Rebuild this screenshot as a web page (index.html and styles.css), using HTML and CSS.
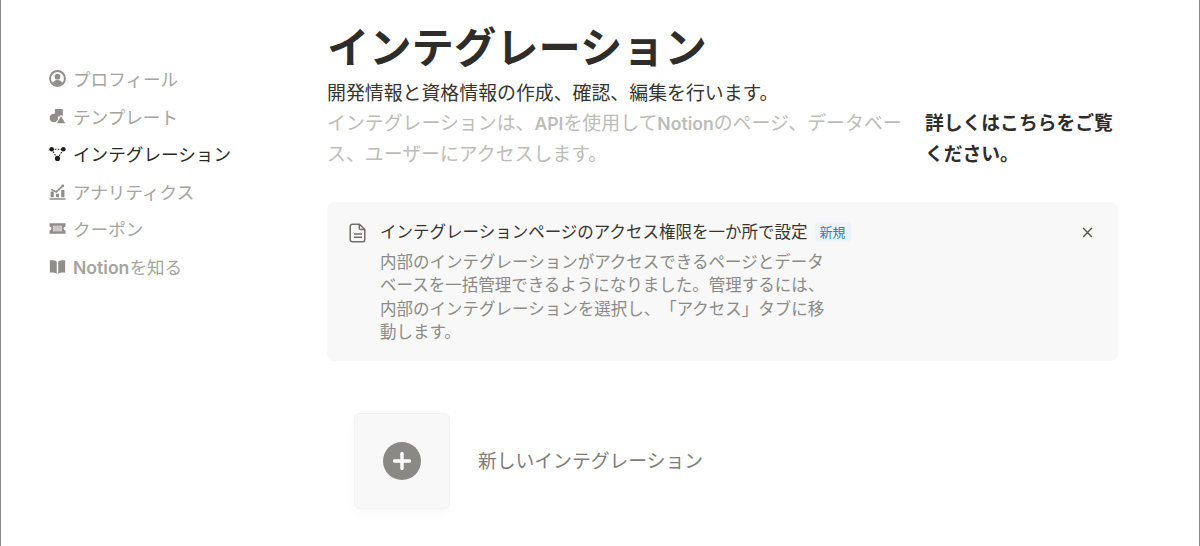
FILE: index.html
```html
<!DOCTYPE html>
<html lang="ja">
<head>
    <meta charset="UTF-8">
    <meta name="viewport" content="width=device-width, initial-scale=1.0">
    <title>インテグレーション</title>
    <link rel="stylesheet" href="styles.css">
</head>
<body>
    <div class="page">
        <nav class="side-nav">
            <a class="nav-item">
                <svg class="nav-icon" viewBox="0 0 16 16"><circle cx="8" cy="8" r="7" fill="none" stroke="currentColor" stroke-width="1.800"/><circle cx="8" cy="6.300" r="2.700" fill="currentColor"/><path d="M3.400 12.300c.8-2 2.500-2.900 4.600-2.900s3.800.9 4.600 2.900c-1.100 1.200-2.800 1.900-4.600 1.900s-3.500-.7-4.600-1.900z" fill="currentColor"/></svg>
                <span>プロフィール</span>
            </a>
            <a class="nav-item">
                <svg class="nav-icon" viewBox="0 0 16 16"><rect x="5.500" y="1" width="7.500" height="7" rx="1" fill="currentColor"/><circle cx="4.600" cy="9.400" r="4" fill="currentColor"/><path d="M11.300 6.800l4.700 8H6.600z" fill="currentColor" stroke="#fff" stroke-width=".9"/></svg>
                <span>テンプレート</span>
            </a>
            <a class="nav-item active">
                <svg class="nav-icon" viewBox="0 0 16 16"><path d="M2.500 4h11L8 13z" fill="none" stroke="currentColor" stroke-width="1" stroke-dasharray="1.600 1.200"/><circle cx="2.500" cy="4" r="2.200" fill="currentColor"/><circle cx="13.500" cy="4" r="2.200" fill="currentColor"/><circle cx="8" cy="12.600" r="2.400" fill="currentColor"/></svg>
                <span>インテグレーション</span>
            </a>
            <a class="nav-item">
                <svg class="nav-icon" viewBox="0 0 16 16"><path d="M.5 14.300h15v1.400H.5zM1.500 8h3v5.500h-3zM6.500 10h3v3.500h-3zM11.500 6.500h3v7h-3z" fill="currentColor"/><path d="M2 6l4.800 2.400 6-5.400" fill="none" stroke="currentColor" stroke-width="1.500"/><circle cx="13" cy="2.800" r="1.300" fill="currentColor"/></svg>
                <span>アナリティクス</span>
            </a>
            <a class="nav-item">
                <svg class="nav-icon" viewBox="0 0 16 16"><rect x="4" y="5.500" width="8" height="5" fill="#c9c8c6"/><path fill-rule="evenodd" d="M.5 3h15v3.200a1.800 1.800 0 0 0 0 3.600V13H.5V9.800a1.800 1.800 0 0 0 0-3.600zM3.800 5.300v5.400h8.400V5.300z" fill="currentColor"/></svg>
                <span>クーポン</span>
            </a>
            <a class="nav-item">
                <svg class="nav-icon" viewBox="0 0 16 16"><path d="M.8 2.300c2.500-.3 5 0 6.500 1.200V15c-1.500-1.100-4-1.500-6.500-1.200zM15.200 2.300c-2.500-.3-5 0-6.500 1.200V15c1.500-1.100 4-1.500 6.500-1.200z" fill="currentColor"/></svg>
                <span><b class="latin">Notion</b>を知る</span>
            </a>
        </nav>

        <main class="content">
            <h1 class="title">インテグレーション</h1>
            <p class="subtitle">開発情報と資格情報の作成、確認、編集を行います。</p>
            <div class="intro">
                <p class="intro-text">インテグレーションは、<b class="latin">API</b>を使用して<b class="latin">Notion</b>のページ、データベース、ユーザーにアクセスします。</p>
                <a class="intro-link">詳しくはこちらをご覧ください。</a>
            </div>

            <section class="callout">
                <svg class="callout-icon" viewBox="0 0 18 20"><path d="M3.500 1.200h7l5.300 5.300v10a2.300 2.300 0 0 1-2.300 2.300h-10a2.300 2.300 0 0 1-2.300-2.300V3.500a2.300 2.300 0 0 1 2.300-2.300z" fill="none" stroke="currentColor" stroke-width="1.500"/><path d="M10.300 1.500v3.700a1.300 1.300 0 0 0 1.300 1.300h3.900M5 11h8M5 14.300h8" fill="none" stroke="currentColor" stroke-width="1.500"/></svg>
                <div class="callout-body">
                    <div class="callout-head">
                        <span>インテグレーションページのアクセス権限を一か所で設定</span>
                        <span class="new-tag">新規</span>
                    </div>
                    <p class="callout-text">内部のインテグレーションがアクセスできるページとデータベースを一括管理できるようになりました。管理するには、内部のインテグレーションを選択し、「アクセス」タブに移動します。</p>
                </div>
                <svg class="close-icon" viewBox="0 0 12 12"><path d="M1.200 1.200l9.600 9.600M10.800 1.200l-9.600 9.600" fill="none" stroke="currentColor" stroke-width="1.500"/></svg>
            </section>

            <div class="new-row">
                <div class="new-tile">
                    <svg class="plus-icon" viewBox="0 0 38 38"><circle cx="19" cy="19" r="19" fill="currentColor"/><path d="M19 11.500v15M11.500 19h15" fill="none" stroke="#fff" stroke-width="3.400" stroke-linecap="round"/></svg>
                </div>
                <span class="new-label">新しいインテグレーション</span>
            </div>
        </main>
    </div>
</body>
</html>
```

FILE: styles.css
```css
* {
    margin: 0;
    padding: 0;
    box-sizing: border-box;
}

body {
    font-family: 'Inter', 'Noto Sans CJK JP', sans-serif;
    text-spacing-trim: space-all;
    background: white;
    color: #37352f;
    width: 1200px;
    height: 546px;
    overflow: hidden;
}

.page {
    width: 1200px;
    height: 546px;
    border-left: 1px solid #8a8a8a;
    border-right: 1px solid #8a8a8a;
    display: flex;
    overflow: hidden;
}

.side-nav {
    width: 326px;
    padding: 60px 0 0 48px;
    display: flex;
    flex-direction: column;
}

.nav-item {
    height: 37.5px;
    display: flex;
    align-items: center;
    gap: 7px;
    font-size: 17.6px;
    color: #a5a4a1;
}

.nav-item.active {
    color: #2a2926;
}

.nav-icon {
    width: 17px;
    height: 17px;
    flex-shrink: 0;
    color: #8f8e8b;
}

.nav-item.active .nav-icon {
    color: #1f1e1c;
}

.latin {
    font-weight: 600;
}

.content {
    width: 791px;
    padding-top: 19px;
}

.title {
    font-size: 42.3px;
    font-weight: 700;
    line-height: 58px;
    color: #2f2d29;
}

.subtitle {
    font-size: 18.9px;
    line-height: 28px;
    margin-top: 3px;
    color: #37352f;
}

.intro {
    display: flex;
    gap: 20px;
    margin-bottom: 32px;
}

.intro-text {
    width: 578px;
    flex-shrink: 0;
    font-size: 18.9px;
    line-height: 31px;
    color: #bdbcb9;
}

.intro-text .latin {
    font-size: 17.6px;
}

.intro-link {
    font-size: 18.8px;
    line-height: 31px;
    font-weight: 700;
    color: #2f2d29;
}

.callout {
    height: 159px;
    position: relative;
    background: #f8f8f8;
    border-radius: 8px;
    padding: 18px 22px 0 22px;
    display: flex;
    gap: 13px;
}

.callout-icon {
    width: 18px;
    height: 20px;
    margin-top: 3px;
    flex-shrink: 0;
    color: #6f6e6a;
}

.callout-body {
    width: 450px;
}

.callout-head {
    display: flex;
    align-items: center;
    gap: 7px;
    font-size: 16.5px;
    line-height: 24px;
    white-space: nowrap;
    color: #37352f;
}

.new-tag {
    font-size: 13px;
    line-height: 20px;
    padding: 0 5px;
    border-radius: 4px;
    background: #eef3f8;
    color: #2f7fc1;
}

.callout-text {
    margin-top: 7px;
    font-size: 16.5px;
    line-height: 23.3px;
    color: #8b8a86;
}

.close-icon {
    position: absolute;
    top: 25px;
    right: 25px;
    width: 11px;
    height: 11px;
    color: #55544f;
}

.new-row {
    display: flex;
    align-items: center;
    gap: 28px;
    margin: 52px 0 0 27px;
}

.new-tile {
    width: 96px;
    height: 96px;
    display: flex;
    align-items: center;
    justify-content: center;
    background: #f8f8f8;
    border-radius: 6px;
    border: 1px solid #f2f2f2;
    box-shadow: 0 6px 12px rgba(0,0,0,0.025);
}

.plus-icon {
    width: 38px;
    height: 38px;
    color: #8a8985;
}

.new-label {
    font-size: 18.8px;
    padding-bottom: 3px;
    color: #7d7c78;
}
```
